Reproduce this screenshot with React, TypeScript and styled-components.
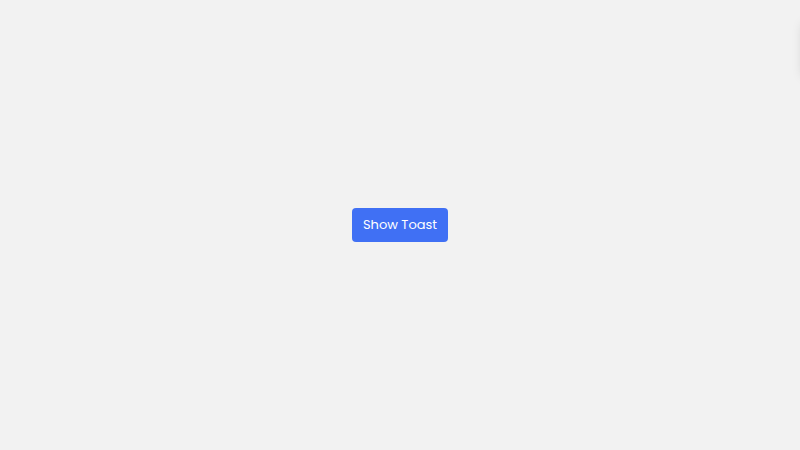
import React from "react";
import styled, { createGlobalStyle } from "styled-components";

const GlobalStyle = createGlobalStyle`
  * {
    box-sizing: border-box;
  }

  body {
    margin: 0;
    overflow: hidden;
    background: #f2f2f2;
    font-family: Poppins, Inter, sans-serif;
  }
`;

const Page = styled.main`
  display: flex;
  align-items: center;
  justify-content: center;
  min-height: 100vh;
`;

const ToastButton = styled.button`
  padding: 8px 11px;
  border: none;
  border-radius: 4px;
  background: #4070f4;
  color: #fff;
  font-family: inherit;
  font-size: 13px;
  font-weight: 400;
  line-height: 18px;
  cursor: pointer;
`;

const Toast = styled.div`
  position: fixed;
  top: 16px;
  left: 100%;
  width: 240px;
  height: 60px;
  border-radius: 8px;
  background: #fff;
  box-shadow: 0 4px 12px -3px rgba(0, 0, 0, 0.15);
`;

export default function App() {
  return (
    <>
      <GlobalStyle />
      <Page>
        <ToastButton type="button">Show Toast</ToastButton>
      </Page>
      <Toast role="status" />
    </>
  );
}
